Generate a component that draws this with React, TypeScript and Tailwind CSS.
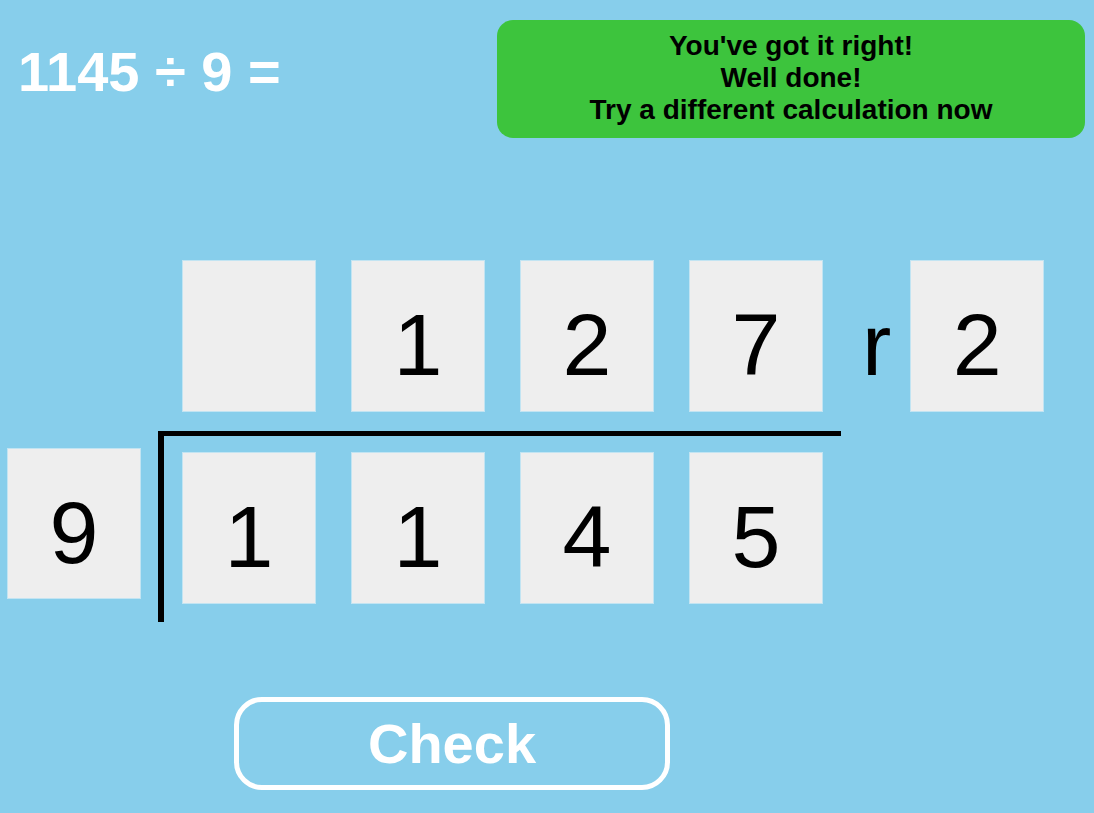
import React from "react";

const font = { fontFamily: '"Liberation Sans", Arial, sans-serif' };

function DigitBox({ value, tall = "h-[152px]" }: { value: string; tall?: string }) {
    return (
        <div
            className={`w-[134px] ${tall} bg-[#eeeeee] border border-[#c2e4f2] flex items-center justify-center pt-[18px] text-[88px] leading-[normal] text-black`}
        >
            {value}
        </div>
    );
}

export default function App() {
    const quotient = ["", "1", "2", "7"];
    const dividend = ["1", "1", "4", "5"];

    return (
        <div className="min-h-screen w-full bg-[#87ceeb] overflow-hidden" style={font}>
            {/* Header */}
            <div className="flex justify-between items-start">
                <h1 className="ml-[18px] mt-[39px] text-[56px] font-bold leading-[normal] text-white">
                    1145 ÷ 9 =
                </h1>
                <div className="mt-[20px] mr-[9px] w-[588px] h-[118px] pt-[10px] bg-[#3dc43d] rounded-[16px] text-center text-[28px] font-bold leading-[normal] text-black">
                    <div>You've got it right!</div>
                    <div>Well done!</div>
                    <div>Try a different calculation now</div>
                </div>
            </div>

            {/* Quotient row */}
            <div className="flex mt-[122px] ml-[182px]">
                <div className="flex gap-[35px]">
                    {quotient.map((d, i) => (
                        <DigitBox key={i} value={d} />
                    ))}
                </div>
                <div className="ml-[39px] h-[152px] flex items-center pt-[18px] text-[88px] leading-[normal] text-black">
                    r
                </div>
                <div className="ml-[19px]">
                    <DigitBox value="2" />
                </div>
            </div>

            {/* Divisor + bracket */}
            <div className="flex mt-[19px]">
                <div className="ml-[7px] mt-[17px]">
                    <DigitBox value="9" tall="h-[151px]" />
                </div>
                <div className="ml-[17px] w-[683px] h-[191px] border-l-[6px] border-t-[5px] border-black pt-[16px] pl-[18px]">
                    <div className="flex gap-[35px]">
                        {dividend.map((d, i) => (
                            <DigitBox key={i} value={d} />
                        ))}
                    </div>
                </div>
            </div>

            {/* Check */}
            <button className="mt-[75px] ml-[234px] w-[436px] h-[93px] border-[5px] border-white rounded-[28px] flex items-center justify-center text-[56px] font-bold leading-[normal] text-white">
                Check
            </button>
        </div>
    );
}
